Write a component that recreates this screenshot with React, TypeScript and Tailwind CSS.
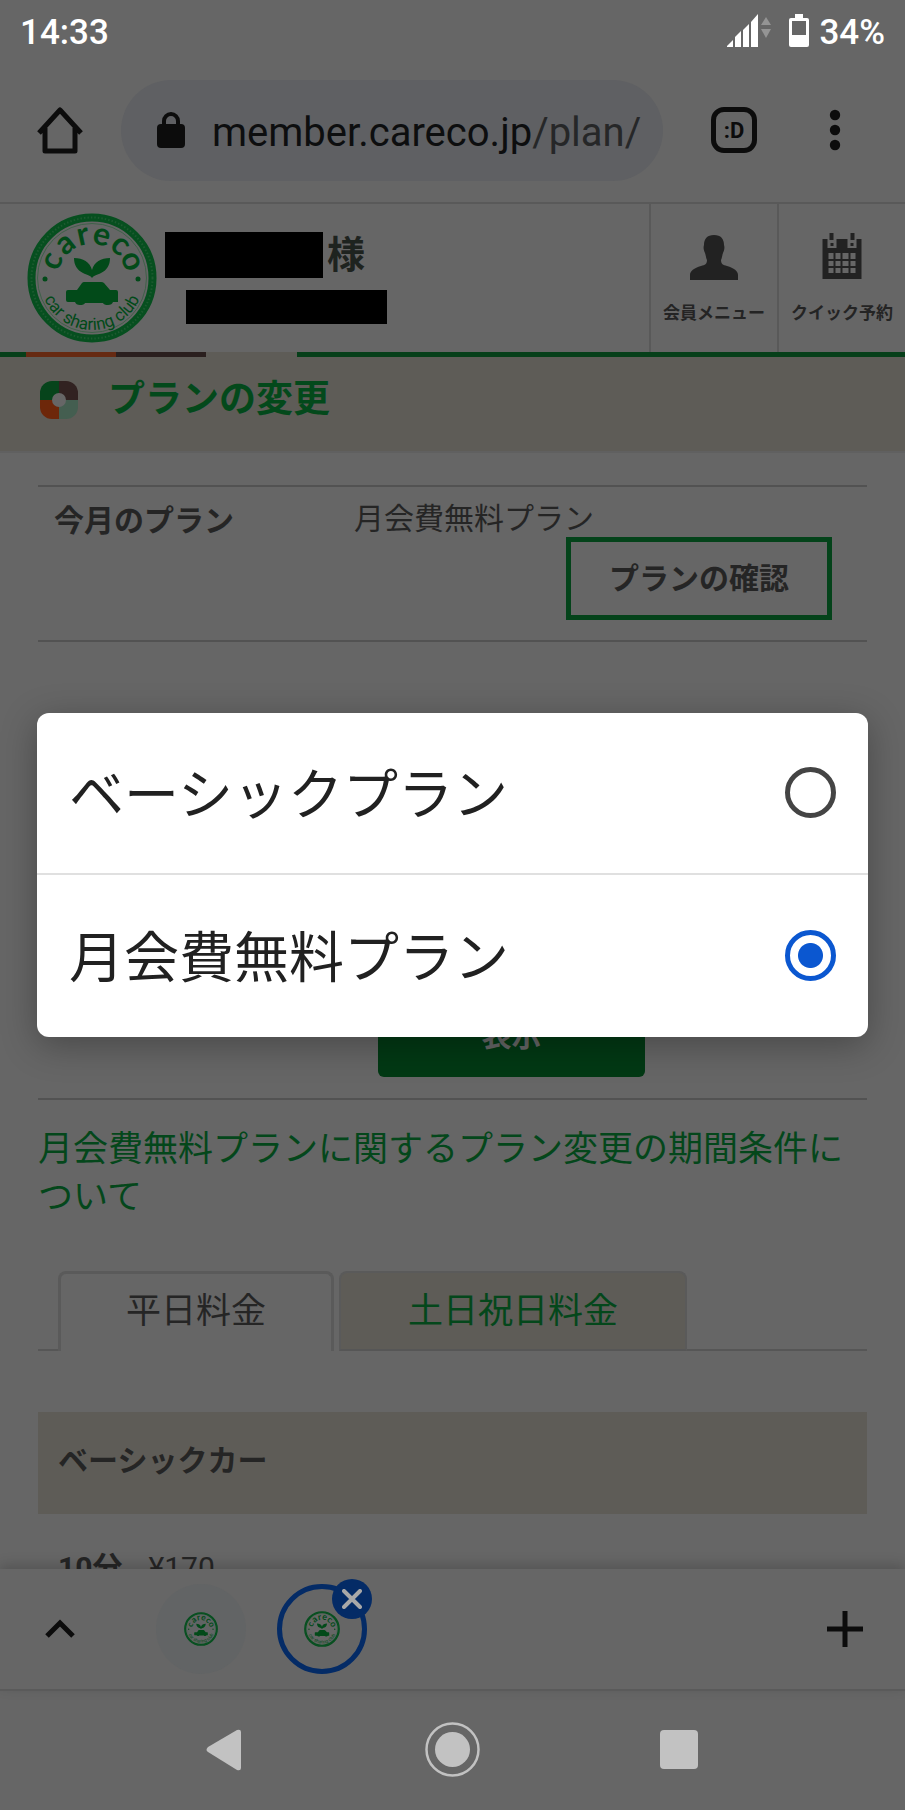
import { useState } from 'react';

const plans = ['ベーシックプラン', '月会費無料プラン'];

// the letters of "careco" and the angle each one sits at on the badge
const logoLetters = [
    { letter: 'c', angle: -67 },
    { letter: 'a', angle: -38 },
    { letter: 'r', angle: -12 },
    { letter: 'e', angle: 13 },
    { letter: 'c', angle: 41 },
    { letter: 'o', angle: 67 },
];

const Logo = ({ className, id }: { className: string; id: string }) => {
    return (
        <svg viewBox="0 0 130 130" className={className} role="img" aria-label="careco car sharing club">
            <circle cx="65" cy="65" r="60.5" fill="none" stroke="#064f1f" strokeWidth="8" />
            <circle cx="65" cy="65" r="60.5" fill="none" stroke="#1d5a30" strokeWidth="2" strokeDasharray="1.5 2" />
            <circle cx="65" cy="65" r="54.5" fill="none" stroke="#3f6149" strokeWidth="1" />
            <g fill="#024a19">
                {logoLetters.map(({ letter, angle }) => (
                    <text
                        key={angle}
                        x="65"
                        y="31"
                        transform={`rotate(${angle} 65 65)`}
                        textAnchor="middle"
                        className="font-['Lato'] text-[32px] font-bold"
                    >
                        {letter}
                    </text>
                ))}
                <path d="M65 65c-2-3-5-3-9-5c-6-3-9-8-9-15c9 0 16 4 18 12c2-8 9-12 18-12c0 7-3 12-9 15c-4 2-7 2-9 5z" />
                <path d="M55 70q1-1 2-1h17q2 0 3 1l6 7h6q2 0 2 2v10h-5q-1 3-5 3t-5-2H58q-1 2-5 2t-5-3h-7q-2 0-2-2v-8q0-2 2-2h9z" />
                <circle cx="18" cy="66" r="2.5" />
                <circle cx="111" cy="66" r="2.5" />
                <path id={id} d="M13 65a52 52 0 0 0 104 0" fill="none" />
                <text textAnchor="middle" className="font-['Roboto'] text-[17px]">
                    <textPath href={`#${id}`} startOffset="50%">car sharing club</textPath>
                </text>
            </g>
        </svg>
    );
};

const StatusBar = () => {
    return (
        <div className="flex h-[62px] shrink-0 items-center justify-between px-5 pt-1 font-['Roboto'] text-[35px] font-medium text-white">
            <span>14:33</span>
            <div className="flex items-center pb-1">
                <svg viewBox="0 0 44 34" className="mr-[18px] h-[34px] w-11">
                    <g fill="#fff">
                        <path d="M0 33v-1l6-6v7z" />
                        <path d="M8 33V23l6-6v16z" />
                        <path d="M16 33V16l6-6v23z" />
                        <path d="M24 33V8l7-8v33z" />
                    </g>
                    <path d="M39 3l5 8H34zM39 24l-5-9h10z" fill="#949494" />
                </svg>
                <svg viewBox="0 0 20 34" className="mr-2.5 h-[34px] w-5">
                    <path d="M6 0h8v4h4q2 0 2 2v25q0 2-2 2H2q-2 0-2-2V6q0-2 2-2h4zM3 7v14h14V7z" fill="#fff" fillRule="evenodd" />
                </svg>
                <span className="pt-1">34%</span>
            </div>
        </div>
    );
};

const BrowserBar = () => {
    return (
        <div className="flex h-[142px] shrink-0 items-center border-b-2 border-[#595959] pr-16 pb-1 pl-9">
            <button aria-label="ホーム" className="mr-[37px]">
                <svg viewBox="0 0 48 48" className="size-12" fill="none" stroke="#0c0c0c" strokeWidth="5" strokeLinejoin="round">
                    <path d="M3 27L24 4l21 23M9 22v23h30V22" />
                </svg>
            </button>
            <div className="flex h-[101px] min-w-0 flex-1 items-center rounded-full bg-[#5f6063] pl-9 font-['Roboto'] text-[40px]">
                <svg viewBox="0 0 28 36" className="mr-[27px] h-9 w-7 shrink-0">
                    <rect y="12" width="28" height="24" rx="4" fill="#0c0c0c" />
                    <path d="M7 14V9a7 7 0 0 1 14 0v5" fill="none" stroke="#0c0c0c" strokeWidth="4" />
                </svg>
                <span className="pt-1.5 text-[#0d0e0f]">member.careco.jp</span>
                <span className="pt-1.5 text-[#262728]">/plan/</span>
            </div>
            <button aria-label="タブ" className="ml-12 flex size-[46px] items-center justify-center rounded-[13px] border-[5px] border-[#0c0c0c] font-['Roboto'] text-[22px] font-bold text-[#0c0c0c]">
                :D
            </button>
            <button aria-label="メニュー" className="ml-[72px]">
                <svg viewBox="0 0 12 44" className="h-11 w-3" fill="#0c0c0c">
                    <circle cx="6" cy="7" r="5.2" />
                    <circle cx="6" cy="22" r="5.2" />
                    <circle cx="6" cy="37" r="5.2" />
                </svg>
            </button>
        </div>
    );
};

const SiteHeader = () => {
    return (
        <header className="flex h-[148px] shrink-0">
            <div className="flex flex-1 items-center pl-[27px]">
                <Logo id="header-logo" className="size-[130px]" />
                <div className="ml-2">
                    <div className="flex items-center">
                        <span className="h-[46px] w-[158px] bg-black"></span>
                        <span className="ml-1 text-[38px] leading-[46px] font-bold text-[#1e231f]">様</span>
                    </div>
                    <div className="mt-3 ml-[21px] h-[34px] w-[201px] bg-black"></div>
                </div>
            </div>
            <a href="#member" className="flex w-32 flex-col items-center border-l-2 border-[#595959] pt-[31px] text-[17px] font-bold text-[#242424]">
                <svg viewBox="0 0 48 46" className="h-[46px] w-12" fill="#222">
                    <path d="M24 0c7 0 10 4 10 10c1 3 0 6-1 8c-1 3-1 5-2 7c0 4 2 5 6 6c7 2 11 5 11 9v5H0v-5c0-4 4-7 11-9c4-1 6-2 6-6c-1-2-1-4-2-7c-1-2-2-5-1-8C14 4 17 0 24 0z" />
                </svg>
                <span className="mt-5">会員メニュー</span>
            </a>
            <a href="#reserve" className="flex w-32 flex-col items-center border-l-2 border-[#595959] pt-[29px] text-[17px] font-bold text-[#242424]">
                <svg viewBox="0 0 39 46" className="h-[46px] w-10">
                    <path d="M0 6h39v40H0z" fill="#222" />
                    <path d="M5 0h9v15H5zM25 0h9v15h-9z" fill="#666" />
                    <path d="M7 0h4v7H7zM28 0h4v7h-4zM8 10h3v3H8zM28 10h3v3h-3z" fill="#222" />
                    <path d="M6 20h5v6H6zM13 20h5v6h-5zM20 20h6v6h-6zM28 20h5v6h-5zM6 28h5v5H6zM13 28h5v5h-5zM20 28h6v5h-6zM28 28h5v5h-5zM6 35h5v5H6zM13 35h5v5h-5zM20 35h6v5h-6zM28 35h5v5h-5z" fill="#666" />
                </svg>
                <span className="mt-[22px]">クイック予約</span>
            </a>
        </header>
    );
};

const PlanPage = () => {
    return (
        <main className="min-h-0 flex-1 overflow-hidden text-[#252525]">
            <div className="flex h-[5px] bg-[#063f19]">
                <span className="ml-[26px] w-[90px] bg-[#662a12]"></span>
                <span className="w-[90px] bg-[#2a1f1e]"></span>
                <span className="w-[91px] bg-[#5e5c57]"></span>
            </div>
            <div className="flex h-24 items-center border-b-2 border-[#606060] bg-[#5e5c57] pb-2 pl-10">
                <svg viewBox="0 0 38 38" className="size-[38px]">
                    <path d="M12 0h7v19H0v-7A12 12 0 0 1 12 0z" fill="#06441b" />
                    <path d="M19 0h7a12 12 0 0 1 12 12v7H19z" fill="#312221" />
                    <path d="M0 19h19v19h-7A12 12 0 0 1 0 26z" fill="#6d270a" />
                    <path d="M19 19h19v7a12 12 0 0 1-12 12h-7z" fill="#445e50" />
                    <circle cx="19" cy="19" r="7" fill="#666" />
                </svg>
                <h1 className="ml-[30px] text-[37px] font-bold text-[#03491b]">プランの変更</h1>
            </div>

            <div className="px-[38px] pt-8">
                <div className="flex h-[157px] border-y-2 border-[#525252] pr-[35px] text-[30px]">
                    <p className="mt-3 w-[316px] pl-4 leading-[44px] font-bold">今月のプラン</p>
                    <div className="flex flex-1 flex-col">
                        <p className="mt-3 leading-10">月会費無料プラン</p>
                        <button className="-mt-0.5 h-[83px] self-end border-[5px] border-[#04431a] px-[38px] leading-[66px] font-bold">
                            プランの確認
                        </button>
                    </div>
                </div>

                <div className="flex h-[458px] items-end justify-center border-b-2 border-[#525252] pb-[21px] pl-[118px]">
                    <button className="h-[83px] w-[267px] rounded-md bg-[#023914] text-[30px] font-bold text-[#666]">
                        表示
                    </button>
                </div>

                <a href="#term" className="mt-[25px] block text-[35px] leading-[48px] text-[#04471b]">
                    月会費無料プランに関するプラン変更の期間条件について
                </a>

                <div className="mt-[50px] flex gap-1 text-[35px] leading-[76px]">
                    <span className="-mr-1 w-5 border-b-2 border-[#565656]"></span>
                    <button className="h-20 rounded-t-lg border-x-3 border-t-3 border-[#5a5a5a] px-[65px] pb-1 leading-[72px]">平日料金</button>
                    <button className="ml-px h-20 rounded-t-lg border-2 border-b-[#565656] border-[#5a5a5a] bg-[#5e5c57] px-[67px] text-[#04471b]">
                        土日祝日料金
                    </button>
                    <span className="-ml-1 flex-1 border-b-2 border-[#565656]"></span>
                </div>

                <h2 className="mt-[61px] bg-[#5e5c57] px-5 pb-1 text-[30px] leading-[98px] font-bold">ベーシックカー</h2>
                <p className="mt-8 flex gap-[26px] px-5 font-['Roboto','Noto_Sans_CJK_JP',sans-serif] text-[30px] leading-[44px]">
                    <span className="font-bold">10分</span>
                    <span>¥170</span>
                </p>
            </div>
        </main>
    );
};

const TabStrip = () => {
    return (
        <div className="relative z-10 flex h-[122px] shrink-0 items-center border-b-2 border-[#5a5a5a] bg-[#666] pr-[42px] pl-[45px] shadow-[0_-4px_12px_rgba(0,0,0,0.18)]">
            <button aria-label="開く">
                <svg viewBox="0 0 30 30" className="size-[30px]" fill="none" stroke="#0c0c0c" strokeWidth="5">
                    <path d="M2 22L15 9l13 13" />
                </svg>
            </button>
            <button aria-label="careco" className="ml-[81px] flex size-[90px] items-center justify-center rounded-full bg-[#626465]">
                <Logo id="tab-logo-1" className="size-[34px]" />
            </button>
            <div className="relative ml-[31px]">
                <button aria-label="careco" className="flex size-[90px] items-center justify-center rounded-full border-[5px] border-[#042b66]">
                    <Logo id="tab-logo-2" className="size-9" />
                </button>
                <button aria-label="タブを閉じる" className="absolute -top-[5px] -right-[5px] flex size-10 items-center justify-center rounded-full bg-[#042b66]">
                    <svg viewBox="0 0 20 20" className="size-5" stroke="#a8a8a8" strokeWidth="4" strokeLinecap="round">
                        <path d="M2 2l16 16M18 2L2 18" />
                    </svg>
                </button>
            </div>
            <button aria-label="新しいタブ" className="ml-auto">
                <svg viewBox="0 0 36 36" className="size-9" stroke="#0c0c0c" strokeWidth="5">
                    <path d="M18 0v36M0 18h36" />
                </svg>
            </button>
        </div>
    );
};

const NavBar = () => {
    return (
        <nav className="flex h-[119px] shrink-0 items-center justify-center gap-[171px] pb-0.5">
            <button aria-label="戻る">
                <svg viewBox="0 0 55 55" className="size-[55px]">
                    <path d="M9 25L38 8q4-1 4 2v36q0 3-4 2L9 30q-3-2 0-5z" fill="#c2c2c2" />
                </svg>
            </button>
            <button aria-label="ホーム">
                <svg viewBox="0 0 55 55" className="size-[55px]">
                    <circle cx="27.5" cy="27.5" r="26" fill="none" stroke="#c2c2c2" strokeWidth="2.5" />
                    <circle cx="27.5" cy="27.5" r="17.5" fill="#c2c2c2" />
                </svg>
            </button>
            <button aria-label="履歴">
                <svg viewBox="0 0 55 55" className="size-[55px]">
                    <rect x="9" y="8" width="38" height="39" rx="4" fill="#c2c2c2" />
                </svg>
            </button>
        </nav>
    );
};

const App = () => {
    // selected plan in the picker
    const [selected, setSelected] = useState(plans[1]);

    return (
        <div className="flex h-screen flex-col overflow-hidden bg-[#666] font-['Liberation_Sans','Noto_Sans_CJK_JP',sans-serif]" lang="ja">
            <StatusBar />
            <BrowserBar />
            <SiteHeader />
            <PlanPage />
            <TabStrip />
            <NavBar />

            <div className="fixed inset-0 z-20 flex items-center px-[37px] pt-[59px] pb-[120px]">
                <div role="dialog" aria-label="プラン" className="w-full divide-y-2 divide-[#e0e0e0] rounded-xl bg-white shadow-[0_8px_36px_rgba(0,0,0,0.3)]">
                    {plans.map((plan) => (
                        <label key={plan} className="flex h-[162px] items-center justify-between px-8 text-[55px] text-[#212121]">
                            <span className="pt-1.5">{plan}</span>
                            <input
                                type="radio"
                                name="plan"
                                checked={selected === plan}
                                onChange={() => setSelected(plan)}
                                className="size-[51px] appearance-none rounded-full border-[5px] border-[#444] checked:border-[#0b57d0] checked:bg-[radial-gradient(circle,#0b57d0_12px,transparent_13px)]"
                            />
                        </label>
                    ))}
                </div>
            </div>
        </div>
    );
};

export default App;
